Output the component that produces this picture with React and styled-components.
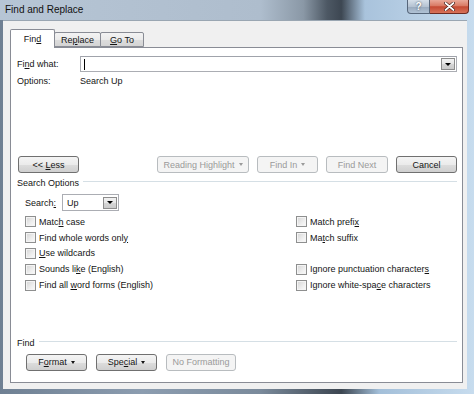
import React from "react";
import styled, { createGlobalStyle } from "styled-components";

const GlobalStyle = createGlobalStyle`
  html, body {
    margin: 0;
    padding: 0;
    background: #c6dcef;
  }
  body {
    font-family: "Liberation Sans", Arial, sans-serif;
    font-size: 9px;
    color: #141414;
  }
`;

const leftChecks = [
  ["Matc", "h", " case"],
  ["Find whole words onl", "y", ""],
  ["", "U", "se wildcards"],
  ["Sounds li", "k", "e (English)"],
  ["Find all ", "w", "ord forms (English)"],
];

const rightChecks = [
  ["Match prefi", "x", ""],
  ["Ma", "t", "ch suffix"],
  null,
  ["Ignore punctuation character", "s", ""],
  ["Ignore white-spa", "c", "e characters"],
];

const Label = ({ parts }) => (
  <span>
    {parts[0]}
    <Key>{parts[1]}</Key>
    {parts[2]}
  </span>
);

const App = () => {
  const rows = leftChecks.map((l, i) => [l, rightChecks[i]]);
  return (
    <>
      <GlobalStyle />
      <Window>
        <TitleBar>
          <Title>Find and Replace</Title>
          <Controls>
            <HelpButton>?</HelpButton>
            <CloseButton>
              <svg width="11" height="9" viewBox="0 0 11 9">
                <path
                  d="M1.5 1 L9.5 8 M9.5 1 L1.5 8"
                  stroke="#3a1410"
                  strokeWidth="3"
                  strokeLinecap="round"
                />
                <path
                  d="M1.5 1 L9.5 8 M9.5 1 L1.5 8"
                  stroke="#ffffff"
                  strokeWidth="1.8"
                  strokeLinecap="round"
                />
              </svg>
            </CloseButton>
          </Controls>
        </TitleBar>

        <Client>
          <TabStrip>
            <Tab $active $w={45}>
              Fin<Key>d</Key>
            </Tab>
            <Tab $w={47}>
              Re<Key>p</Key>lace
            </Tab>
            <Tab $w={44}>
              <Key>G</Key>o To
            </Tab>
          </TabStrip>

          <Panel>
            <FieldRow>
              <FieldLabel>
                Fi<Key>n</Key>d what:
              </FieldLabel>
              <Combo>
                <Cursor />
                <DropButton>
                  <Arrow />
                </DropButton>
              </Combo>
            </FieldRow>
            <InfoRow>
              <FieldLabel>Options:</FieldLabel>
              <span>Search Up</span>
            </InfoRow>

            <ActionRow>
              <Button $w={61} $ml={1}>
                <span>
                  &lt;&lt;&nbsp;<Key>L</Key>ess
                </span>
              </Button>
              <Spacer />
              <Button $w={92} disabled>
                <span>Reading Highlight</span>
                <Caret />
              </Button>
              <Button $w={61} disabled>
                <span>Find In</span>
                <Caret />
              </Button>
              <Button $w={62} disabled>
                Find Next
              </Button>
              <Button $w={61}>Cancel</Button>
            </ActionRow>

            <GroupHeader $mt={4}>
              <span>Search Options</span>
              <Rule />
            </GroupHeader>

            <SearchRow>
              <span>
                Search<Key>:</Key>
              </span>
              <Select>
                <span>Up</span>
                <DropButton>
                  <Arrow />
                </DropButton>
              </Select>
            </SearchRow>

            <CheckGrid>
              {rows.map(([l, r], i) => (
                <React.Fragment key={i}>
                  <CheckItem>
                    <Box />
                    <Label parts={l} />
                  </CheckItem>
                  {r ? (
                    <CheckItem>
                      <Box />
                      <Label parts={r} />
                    </CheckItem>
                  ) : (
                    <div />
                  )}
                </React.Fragment>
              ))}
            </CheckGrid>

            <GroupHeader $mt={44}>
              <span>Find</span>
              <Rule />
            </GroupHeader>

            <FormatRow>
              <Button $w={61}>
                <span>
                  F<Key>o</Key>rmat
                </span>
                <Caret />
              </Button>
              <Button $w={61}>
                <span>
                  Spe<Key>c</Key>ial
                </span>
                <Caret />
              </Button>
              <Button $w={70} disabled>
                No Formatting
              </Button>
            </FormatRow>
          </Panel>
        </Client>
      </Window>
    </>
  );
};

const Window = styled.div`
  width: 474px;
  height: 394px;
  display: flex;
  flex-direction: column;
  background: linear-gradient(
    to right,
    #6f8093 0%,
    #8c9db0 30%,
    #7a8a9b 55%,
    #4a5561 68%,
    #3c4651 72%,
    #a3bfd9 80%,
    #c7dcee 100%
  );
  overflow: hidden;
`;

const TitleBar = styled.div`
  height: 20px;
  display: flex;
  align-items: flex-start;
  background: linear-gradient(
    to right,
    #b6c5d5 0%,
    #aebdcd 55%,
    #8a98a6 64%,
    #4d5864 69%,
    #3d4752 72%,
    #a9c3dc 77%,
    #c8dcee 100%
  );
`;

const Title = styled.div`
  flex: 1;
  padding: 4px 0 0 5px;
  font-size: 10px;
  color: #111;
`;

const Controls = styled.div`
  display: flex;
  margin-right: 5px;
  height: 14px;
`;

const HelpButton = styled.div`
  width: 23px;
  height: 14px;
  box-sizing: border-box;
  border: 1px solid #56667a;
  border-top: none;
  border-radius: 0 0 0 4px;
  background: linear-gradient(#d5dfe9 0%, #b5c3d2 50%, #98a9bc 51%, #b1c3d6 100%);
  color: #fff;
  font-weight: bold;
  font-size: 10px;
  text-align: center;
  line-height: 13px;
  text-shadow: 0 0 2px #2c3845;
`;

const CloseButton = styled.div`
  width: 39px;
  height: 14px;
  box-sizing: border-box;
  border: 1px solid #6e2b22;
  border-left: none;
  border-top: none;
  border-radius: 0 0 4px 0;
  background: linear-gradient(#e9a999 0%, #d97a64 45%, #c54a33 52%, #d8735a 100%);
  display: flex;
  align-items: center;
  justify-content: center;
`;

const Client = styled.div`
  flex: 1;
  margin: 0 7px 5px 3px;
  padding: 8px 4px 6px 7px;
  background: #f0f0f0;
  border-top: 1px solid #9aa6b2;
  display: flex;
  flex-direction: column;
`;

const TabStrip = styled.div`
  display: flex;
  align-items: flex-end;
  height: 18px;
  position: relative;
  z-index: 1;
`;

const Tab = styled.div`
  width: ${(p) => p.$w}px;
  height: ${(p) => (p.$active ? 19 : 15)}px;
  box-sizing: border-box;
  border: 1px solid #898c95;
  border-bottom: ${(p) => (p.$active ? "none" : "1px solid #898c95")};
  margin-left: ${(p) => (p.$active ? 0 : -1)}px;
  margin-bottom: ${(p) => (p.$active ? -1 : 0)}px;
  border-radius: 2px 2px 0 0;
  background: ${(p) =>
    p.$active
      ? "#ffffff"
      : "linear-gradient(#f3f3f3 0%, #ebebeb 50%, #dddddd 51%, #d4d4d4 100%)"};
  display: flex;
  justify-content: center;
  padding-top: ${(p) => (p.$active ? 4 : 2)}px;
  font-size: 9px;
`;

const Panel = styled.div`
  flex: 1;
  background: #ffffff;
  border: 1px solid #898c95;
  padding: 8px 5px 11px 6px;
  display: flex;
  flex-direction: column;
`;

const FieldRow = styled.div`
  display: flex;
  align-items: center;
  height: 16px;
`;

const FieldLabel = styled.span`
  width: 63px;
  flex: none;
`;

const Combo = styled.div`
  flex: 1;
  height: 16px;
  box-sizing: border-box;
  border: 1px solid #abadb3;
  border-top-color: #a0a3ab;
  display: flex;
  align-items: center;
  justify-content: space-between;
  padding: 0 1px 0 3px;
`;

const Cursor = styled.span`
  width: 1px;
  height: 11px;
  background: #000;
`;

const DropButton = styled.div`
  width: 14px;
  height: 12px;
  box-sizing: border-box;
  border: 1px solid #8d8d8d;
  background: linear-gradient(#f2f2f2 0%, #e6e6e6 50%, #d6d6d6 51%, #cbcbcb 100%);
  display: flex;
  align-items: center;
  justify-content: center;
`;

const Arrow = styled.span`
  width: 0;
  height: 0;
  border-left: 3px solid transparent;
  border-right: 3px solid transparent;
  border-top: 3px solid #000;
`;

const InfoRow = styled.div`
  display: flex;
  align-items: center;
  height: 14px;
  margin-top: 2px;
`;

const ActionRow = styled.div`
  display: flex;
  align-items: center;
  gap: 8px;
  margin-top: 68px;
`;

const Spacer = styled.div`
  flex: 1;
`;

const Button = styled.button`
  width: ${(p) => p.$w}px;
  margin-left: ${(p) => p.$ml || 0}px;
  height: 17px;
  padding: 0;
  box-sizing: border-box;
  font-family: "Liberation Sans", Arial, sans-serif;
  font-size: 9px;
  color: #141414;
  border: 1px solid #707070;
  border-radius: 3px;
  background: linear-gradient(#f4f4f4 0%, #ebebeb 50%, #dddddd 51%, #cfcfcf 100%);
  display: flex;
  align-items: center;
  justify-content: center;
  white-space: nowrap;

  &:disabled {
    color: #9a9a9a;
    border-color: #b8bcbf;
    background: #f4f4f4;
  }
`;

const Caret = styled.span`
  display: inline-block;
  margin-left: 4px;
  width: 0;
  height: 0;
  border-left: 2.5px solid transparent;
  border-right: 2.5px solid transparent;
  border-top: 3px solid currentColor;
`;

const Key = styled.u`
  text-decoration: underline;
  text-underline-offset: 1px;
`;

const GroupHeader = styled.div`
  display: flex;
  align-items: center;
  gap: 4px;
  height: 12px;
  margin-top: ${(p) => p.$mt}px;
`;

const Rule = styled.div`
  flex: 1;
  height: 0;
  border-top: 1px solid #d5dfe5;
  border-bottom: 1px solid #ffffff;
  margin-top: -2px;
`;

const SearchRow = styled.div`
  display: flex;
  align-items: center;
  gap: 6px;
  margin: 5px 0 0 8px;
  height: 17px;
`;

const Select = styled.div`
  width: 57px;
  height: 17px;
  box-sizing: border-box;
  border: 1px solid #abadb3;
  display: flex;
  align-items: center;
  justify-content: space-between;
  padding: 0 1px 0 4px;
`;

const CheckGrid = styled.div`
  display: grid;
  grid-template-columns: 271px 1fr;
  grid-auto-rows: 15.8px;
  margin: 3px 0 0 8px;
`;

const CheckItem = styled.div`
  display: flex;
  align-items: center;
  gap: 3px;
`;

const Box = styled.span`
  width: 11px;
  height: 11px;
  box-sizing: border-box;
  border: 1px solid #8e8f8f;
  background: linear-gradient(135deg, #d4d4d4 0%, #eeeeee 60%, #fbfbfb 100%);
  box-shadow: inset 0 0 0 1px #f4f4f4;
  flex: none;
`;

const FormatRow = styled.div`
  display: flex;
  gap: 9px;
  margin: 5px 0 0 9px;
`;

export default App;
